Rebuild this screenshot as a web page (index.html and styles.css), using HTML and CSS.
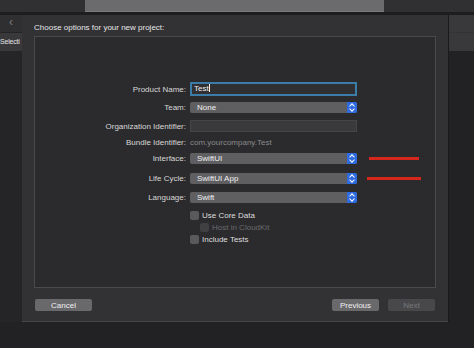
FILE: index.html
```html
<!DOCTYPE html>
<html lang="en">
<head>
  <meta charset="UTF-8" />
  <title>New Project Options</title>
  <meta name="viewport" content="width=device-width, initial-scale=1.0" />
  <link rel="stylesheet" href="styles.css">
</head>
<body>
  <div class="titlebar">
    <div class="tab"></div>
  </div>

  <div class="main">
    <div class="side">
      <div class="side-top">&lsaquo;</div>
      <div class="side-mid">Selecti</div>
    </div>

    <div class="sheet">
      <div class="heading">Choose options for your new project:</div>

      <div class="panel">
        <div class="row h18">
          <label>Product Name:</label>
          <div class="textfield focused">Test<span class="caret"></span></div>
        </div>
        <div class="row h18">
          <label>Team:</label>
          <div class="popup"><span>None</span><i class="stepper"></i></div>
        </div>
        <div class="row h20">
          <label>Organization Identifier:</label>
          <div class="textfield empty"></div>
        </div>
        <div class="row h12">
          <label>Bundle Identifier:</label>
          <div class="static">com.yourcompany.Test</div>
        </div>
        <div class="row h21">
          <label>Interface:</label>
          <div class="popup"><span>SwiftUI</span><i class="stepper"></i></div>
          <div class="mark"></div>
        </div>
        <div class="row h19">
          <label>Life Cycle:</label>
          <div class="popup"><span>SwiftUI App</span><i class="stepper"></i></div>
          <div class="mark wide"></div>
        </div>
        <div class="row h19">
          <label>Language:</label>
          <div class="popup"><span>Swift</span><i class="stepper"></i></div>
        </div>

        <div class="checks">
          <div class="check"><i class="box"></i>Use Core Data</div>
          <div class="check sub disabled"><i class="box"></i>Host in CloudKit</div>
          <div class="check"><i class="box"></i>Include Tests</div>
        </div>
      </div>

      <div class="buttons">
        <button class="btn cancel">Cancel</button>
        <div class="spacer"></div>
        <button class="btn">Previous</button>
        <button class="btn off">Next</button>
      </div>
    </div>

    <div class="side right">
      <div class="side-top"></div>
      <div class="side-mid"></div>
    </div>
  </div>

  <div class="bottom"></div>
</body>
</html>
```

FILE: styles.css
```css
body {
  margin: 0;
  width: 474px;
  height: 348px;
  overflow: hidden;
  background: #222225;
  font-family: 'Liberation Sans', Arial, sans-serif;
  font-size: 8px;
  color: #dcdcdc;
}
.titlebar {
  height: 12px;
  background: #303033;
  border-bottom: 3px solid #1d1d1f;
}
.tab {
  margin-left: 85px;
  width: 299px;
  height: 11px;
  background: #6b6b6e;
  border-bottom: 1px solid #7a7a7d;
}
.main {
  display: flex;
  height: 307px;
}
.side {
  width: 22px;
  background: #252528;
}
.side.right {
  width: 25px;
  background: #222225;
  border-left: 1px solid #1a1a1c;
}
.side-top {
  height: 17px;
  background: #2f2f32;
  border-bottom: 1px solid #242426;
  color: #77777a;
  font-size: 12px;
  line-height: 15px;
  text-align: center;
}
.side-mid {
  height: 18px;
  background: #39393c;
  color: #e4e4e4;
  font-size: 7px;
  letter-spacing: -0.2px;
  line-height: 18px;
  white-space: nowrap;
}
.right .side-top {
  background: #39393c;
  border-bottom: 1px solid #333336;
}
.sheet {
  width: 426px;
  background: #323235;
  border-bottom: 1px solid #47474a;
  display: flex;
  flex-direction: column;
}
.heading {
  padding: 8px 0 0 12px;
  height: 13px;
  color: #e6e6e6;
}
.panel {
  margin: 0 12px;
  height: 207px;
  padding-top: 43px;
  background: #2b2b2d;
  border: 1px solid #4a4a4c;
}
.row {
  display: grid;
  grid-template-columns: 151px 167px auto;
  column-gap: 4px;
  align-items: center;
}
.h12 { height: 12px; }
.h18 { height: 18px; }
.h19 { height: 19px; }
.h20 { height: 20px; }
.h21 { height: 21px; }
.row label {
  text-align: right;
  color: #d8d8d8;
}
.textfield {
  box-sizing: border-box;
  height: 12px;
  background: #3a3a3c;
  border: 1px solid #454547;
  color: #f0f0f0;
  padding-left: 3px;
  line-height: 10px;
}
.textfield.focused {
  height: 14px;
  background: #303033;
  border: 2px solid #3b7ca8;
  line-height: 10px;
  padding-left: 2px;
}
.caret {
  display: inline-block;
  width: 1px;
  height: 8px;
  background: #f0f0f0;
  vertical-align: -1px;
}
.static {
  color: #8a8a8c;
}
.popup {
  height: 11px;
  background: #5f5f62;
  border-radius: 2px;
  display: flex;
  align-items: center;
  color: #efefef;
  padding-left: 7px;
}
.popup span {
  flex: 1;
}
.stepper {
  width: 10px;
  height: 11px;
  border-radius: 0 2px 2px 0;
  background: #2f6be0;
  position: relative;
}
.stepper::before, .stepper::after {
  content: '';
  position: absolute;
  left: 3px;
  width: 3px;
  height: 3px;
  border-left: 1px solid #fff;
  border-top: 1px solid #fff;
}
.stepper::before {
  top: 2px;
  transform: rotate(45deg);
}
.stepper::after {
  top: 5px;
  transform: rotate(225deg);
}
.mark {
  width: 50px;
  height: 3px;
  background: #d5271c;
  margin-left: 8px;
}
.mark.wide {
  width: 54px;
  margin-left: 6px;
}
.checks {
  padding: 3px 0 0 155px;
  display: flex;
  flex-direction: column;
  gap: 1px;
}
.check {
  height: 11px;
  display: flex;
  align-items: center;
  gap: 3px;
  color: #dedede;
}
.check.sub {
  padding-left: 10px;
}
.check.disabled {
  color: #6a6a6c;
}
.box {
  width: 9px;
  height: 9px;
  border-radius: 2px;
  background: #5a5a5d;
}
.disabled .box {
  background: #404043;
}
.buttons {
  display: flex;
  gap: 9px;
  padding: 11px 13px 0 13px;
}
.spacer {
  flex: 1;
}
.btn {
  height: 12px;
  width: 47px;
  padding: 0;
  border: none;
  border-radius: 2px;
  background: #69696c;
  color: #f0f0f0;
  font-family: 'Liberation Sans', Arial, sans-serif;
  font-size: 8px;
}
.btn.cancel {
  width: 57px;
}
.btn.off {
  background: #48484b;
  color: #78787a;
}
.bottom {
  height: 26px;
  background: #222225;
}
```
